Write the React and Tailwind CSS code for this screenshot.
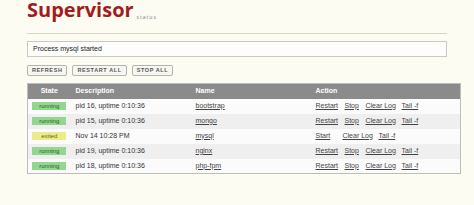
const rows = [
  { state: 'running', desc: 'pid 16, uptime 0:10:36', name: 'bootstrap' },
  { state: 'running', desc: 'pid 15, uptime 0:10:36', name: 'mongo' },
  { state: 'exited', desc: 'Nov 14 10:28 PM', name: 'mysql' },
  { state: 'running', desc: 'pid 19, uptime 0:10:36', name: 'nginx' },
  { state: 'running', desc: 'pid 18, uptime 0:10:36', name: 'php-fpm' },
];

function Badge({ state }) {
  const cls =
    state === 'running'
      ? 'bg-[#92d68f] text-[#2f5a2c]'
      : 'bg-[#ecec8a] text-[#6b6420]';
  return (
    <span className={'inline-block w-[34px] h-[8px] leading-[8px] text-center text-[6px] ' + cls}>
      {state}
    </span>
  );
}

function Actions({ state }) {
  if (state === 'exited') {
    return (
      <div className="flex">
        <a className="underline w-[27px]">Start</a>
        <a className="underline w-[36px]">Clear Log</a>
        <a className="underline">Tail -f</a>
      </div>
    );
  }
  return (
    <div className="flex">
      <a className="underline w-[29px]">Restart</a>
      <a className="underline w-[21px]">Stop</a>
      <a className="underline w-[36px]">Clear Log</a>
      <a className="underline">Tail -f</a>
    </div>
  );
}

export default function App() {
  return (
    <div className="w-[474px] h-[205px] bg-[#fcfcf3] px-[27px] text-[#333] font-['Liberation_Sans',Arial,sans-serif] overflow-hidden">
      <div className="flex items-end h-[20px] pt-[0px]">
        <span className="font-['Open_Sans',sans-serif] font-bold text-[20px] leading-[20px] text-[#a11d1d]">
          Supervisor
        </span>
        <span className="ml-[3px] leading-none text-[5px] tracking-[1px] text-[#777] font-['Open_Sans',sans-serif]">
          status
        </span>
      </div>
      <div className="mt-[13px] border-t border-[#d6d6cc]" />
      <div className="mt-[7px] h-[16px] border border-[#c9c9c0] bg-[#fdfdfb] pl-[5px] flex items-center text-[7px] text-[#222]">
        Process mysql started
      </div>
      <div className="mt-[8px] flex gap-[5px]">
        {['REFRESH', 'RESTART ALL', 'STOP ALL'].map((b) => (
          <button
            key={b}
            className="h-[11px] px-[4px] border border-[#b5b5ad] rounded-[2px] bg-[#f7f7f1] text-[5.5px] font-bold tracking-[0.6px] text-[#555] leading-none"
          >
            {b}
          </button>
        ))}
      </div>
      <table className="mt-[7px] w-[434px] border-collapse border border-[#bdbdbd] text-[7px] table-fixed">
        <thead>
          <tr className="bg-[#8b8b8b] text-white font-bold h-[15px]">
            <th className="w-[43px] text-center font-bold">State</th>
            <th className="w-[120px] text-left pl-[5px] font-bold">Description</th>
            <th className="w-[120px] text-left pl-[5px] font-bold">Name</th>
            <th className="text-left pl-[5px] font-bold">Action</th>
          </tr>
        </thead>
        <tbody>
          {rows.map((r, i) => (
            <tr key={r.name} className={'h-[15px] ' + (i % 2 ? 'bg-[#efefef]' : 'bg-[#fbfbfb]')}>
              <td className="text-center">
                <Badge state={r.state} />
              </td>
              <td className="pl-[5px] text-[#333]">{r.desc}</td>
              <td className="pl-[5px] text-[#444]">
                <a className="underline">{r.name}</a>
              </td>
              <td className="pl-[5px] text-[#444]">
                <Actions state={r.state} />
              </td>
            </tr>
          ))}
        </tbody>
      </table>
    </div>
  );
}
